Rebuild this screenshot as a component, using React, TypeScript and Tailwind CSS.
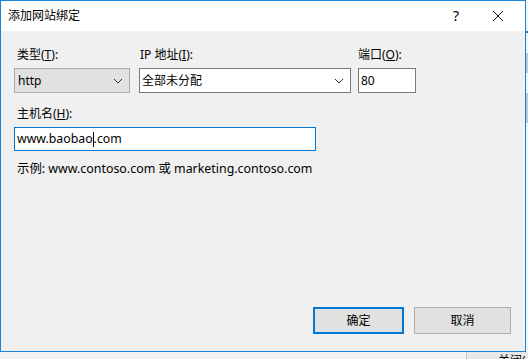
import React from "react";

const font = { fontFamily: '"Noto Sans", "Noto Sans CJK SC", sans-serif' };

function Chevron() {
  return (
    <svg width="10" height="6" viewBox="0 0 10 6" className="shrink-0">
      <path d="M1 1 L5 5 L9 1" fill="none" stroke="#333" strokeWidth="1" />
    </svg>
  );
}

export default function App() {
  return (
    <div
      className="relative h-[359px] w-[528px] overflow-hidden bg-[#f3f3f3] text-[12px] text-black"
      style={font}
    >
      <div className="flex h-[352px] w-[526px] flex-col border border-[#1883d7] bg-[#f0f0f0]">
        <div className="flex h-[30px] shrink-0 items-center bg-white pl-[7px]">
          <span className="text-[12px] leading-none">添加网站绑定</span>
          <span className="ml-auto mr-[33px] text-[14px] leading-none">?</span>
          <svg width="12" height="12" viewBox="0 0 12 12" className="mr-[21px]">
            <path d="M1 1 L11 11 M11 1 L1 11" stroke="#111" strokeWidth="1" />
          </svg>
        </div>

        <div className="flex flex-1 flex-col pl-[13px] pr-[14px] pt-[15px] pb-[17px]">
          <div className="flex items-start">
            <div className="flex w-[125px] flex-col">
              <span className="h-[22px] pl-[3px] leading-[18px]">
                类型(<u>T</u>):
              </span>
              <div className="flex h-[25px] w-[116px] items-center justify-between border border-[#adadad] bg-[#e1e1e1] pl-[3px] pr-[6px]">
                <span>http</span>
                <Chevron />
              </div>
            </div>
            <div className="flex w-[219px] flex-col">
              <span className="h-[22px] pl-[1px] leading-[18px]">
                IP 地址(<u>I</u>):
              </span>
              <div className="flex h-[25px] w-[212px] items-center justify-between border border-[#7a7a7a] bg-white pl-[2px] pr-[6px]">
                <span>全部未分配</span>
                <Chevron />
              </div>
            </div>
            <div className="flex flex-col">
              <span className="h-[22px] leading-[18px]">
                端口(<u>O</u>):
              </span>
              <div className="flex h-[25px] w-[58px] items-center border border-[#7a7a7a] bg-white pl-[2px]">
                80
              </div>
            </div>
          </div>

          <span className="mt-[12px] h-[22px] pl-[3px] leading-[18px]">
            主机名(<u>H</u>):
          </span>
          <div className="flex h-[24px] w-[302px] items-center border border-[#0078d7] bg-white pl-[2px] text-[12.3px]">
            <span>www.baobao</span>
            <span className="h-[15px] w-px bg-black" />
            <span>.com</span>
          </div>

          <p className="mt-[9px] pl-[3px] text-[12.4px] leading-[18px]">
            示例: www.contoso.com 或 marketing.contoso.com
          </p>

          <div className="mt-auto flex justify-end gap-[10px]">
            <button className="h-[27px] w-[91px] border-2 border-[#0078d7] bg-[#e1e1e1]">
              确定
            </button>
            <button className="h-[27px] w-[97px] border border-[#adadad] bg-[#e1e1e1]">
              取消
            </button>
          </div>
        </div>
      </div>

      <div className="absolute bottom-0 left-[466px] flex h-[7px] w-[62px] items-end overflow-hidden border-l border-[#c8c8c8] bg-[#e8e8e8] pl-[31px]">
        <span className="translate-y-[8px] text-[12px] leading-none">关闭(</span>
      </div>
      <div className="absolute right-0 top-[31px] flex h-[320px] w-[2px] flex-col gap-[20px]">
        <div className="h-[2px] bg-[#1883d7]" />
        <div className="h-[20px] bg-[#c8c8c8]" />
        <div className="h-[30px] bg-[#c8c8c8]" />
      </div>
    </div>
  );
}
